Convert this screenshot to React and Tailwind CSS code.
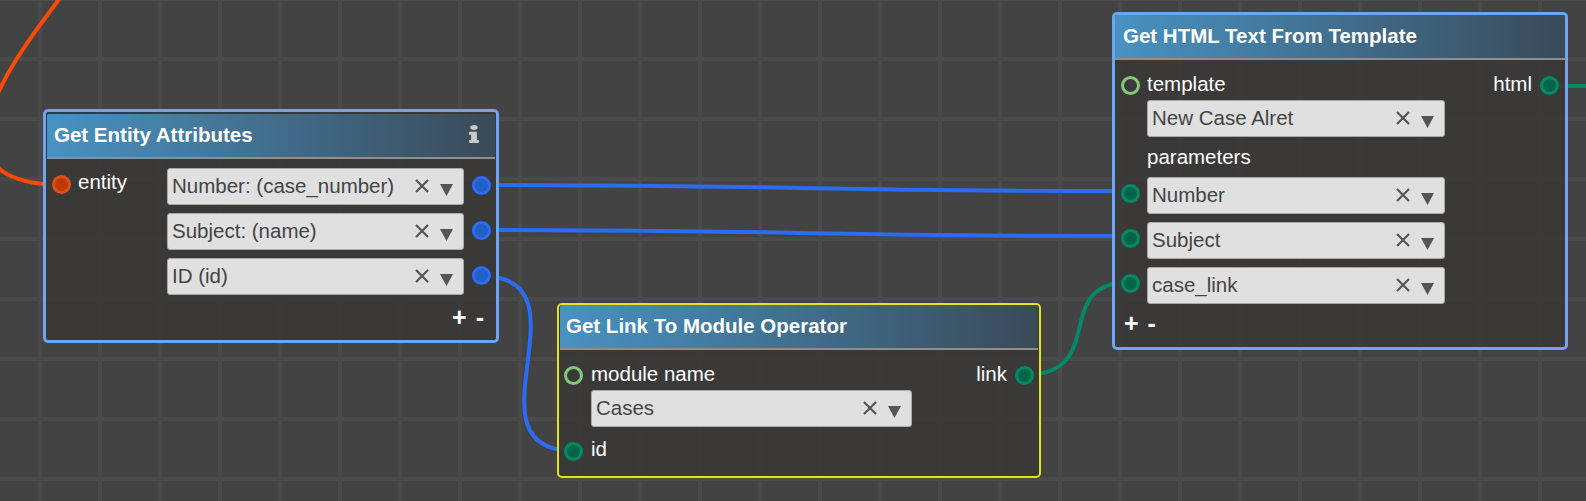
import { FaInfo } from 'react-icons/fa';

const socketStyles = {
  blue: 'border-[#2b6cf2] bg-[#215fc4]',
  green: 'border-[#008a66] bg-[#006647]',
  red: 'border-[#d9501f] bg-[#bf3a00]',
  open: 'border-[#82c77c] bg-transparent',
};

function Socket({ type, className = '' }) {
  return <div className={`w-[19px] h-[19px] shrink-0 rounded-full border-[3px] ${socketStyles[type]} ${className}`} />;
}

function Select({ label, className = 'w-[297px]' }) {
  return (
    <div className={`flex items-center h-[37px] shrink-0 pl-[4px] pr-[10px] rounded-[3px] bg-[#e0e0e0] border border-[#aaaaaa] text-[#444444] ${className}`}>
      <span className="flex-1 whitespace-nowrap pb-[2px]">{label}</span>
      <svg width="14" height="14" viewBox="0 0 14 14" className="mr-[11px] mb-[2px]">
        <path d="M1 1 L13 13 M13 1 L1 13" stroke="#555555" strokeWidth="2.2" fill="none" />
      </svg>
      <svg width="13" height="12" viewBox="0 0 13 12" className="mt-[6px]">
        <path d="M0 0 H13 L6.5 12 Z" fill="#555555" />
      </svg>
    </div>
  );
}

function Header({ title, info, className = 'pl-[7px]' }) {
  return (
    <div className={`flex items-center justify-between h-[43px] pr-[16px] border-b-2 border-[#8f8f8f] box-content bg-[linear-gradient(90deg,#4892c2,#3a4a58)] rounded-t-[2px] ${className}`}>
      <span className="font-bold text-white whitespace-nowrap pb-[2px]">{title}</span>
      {info && <FaInfo preserveAspectRatio="none" className="text-[#c9c9c9] w-[10px] h-[18px] mb-[3px]" />}
    </div>
  );
}

function Node({ title, info, headerClass, className, children }) {
  return (
    <div className={`absolute rounded-[5px] bg-[#3a3938]/95 ${className}`}>
      <Header title={title} info={info} className={headerClass} />
      {children}
    </div>
  );
}

function Controls({ className = '' }) {
  return (
    <div className={`flex items-center gap-[9px] font-bold text-white text-[25px] leading-[24px] ${className}`}>
      <span>+</span>
      <span>-</span>
    </div>
  );
}

export default function App() {
  return (
    <div
      className="relative w-[1586px] h-[501px] overflow-hidden bg-[#434343] bg-[linear-gradient(#4a4a4a_4px,transparent_4px),linear-gradient(90deg,#4a4a4a_4px,transparent_4px)] bg-size-[60px_60px] bg-position-[38px_57px] text-[20.5px] leading-[24px]"
      style={{ fontFamily: '"Liberation Sans", Arial, sans-serif' }}
    >
      {/* wires sit under the nodes */}
      <svg width="1586" height="501" className="absolute inset-0" fill="none" strokeWidth="4">
        <path d="M60 -2 C36 30 12 62 -2 93 C-30 140 -20 184 61 185" stroke="#fa4a05" />
        <path d="M481 185 C800 185 800 191 1130 191" stroke="#2b6cf2" />
        <path d="M481 230 C800 230 800 236 1130 236" stroke="#2b6cf2" />
        <path d="M481 276 C596 276 459 451 574 451" stroke="#2b6cf2" />
        <path d="M1024 375 C1110 375 1050 282 1130 282" stroke="#008a66" />
        <path d="M1550 86 H1590" stroke="#008a66" />
      </svg>

      <Node
        title="Get Entity Attributes"
        info
        className="left-[43px] top-[109px] w-[456px] h-[234px] border-[3px] border-[#6ea4f2] pt-[2px] px-[1px]"
      >
        <div className="flex pl-[5px] pt-[9px]">
          <div className="flex items-start gap-[7px] w-[115px] pt-[7px]">
            <Socket type="red" />
            <span className="-mt-[5px] text-white">entity</span>
          </div>
          <div className="flex flex-col gap-[8px]">
            {['Number: (case_number)', 'Subject: (name)', 'ID (id)'].map((label) => (
              <div key={label} className="flex items-center gap-[8px]">
                <Select label={label} />
                <Socket type="blue" className="-mt-[2px]" />
              </div>
            ))}
            <Controls className="justify-end pr-[7px] mt-[2px]" />
          </div>
        </div>
      </Node>

      <Node
        title="Get Link To Module Operator"
        headerClass="pl-[6px]"
        className="left-[557px] top-[303px] w-[484px] h-[175px] border-2 border-[#e4e41c] px-[1px]"
      >
        <div className="flex justify-between pl-[4px] pr-[4px] pt-[12px]">
          <div>
            <div className="flex items-start gap-[8px]">
              <Socket type="open" className="mt-[4px]" />
              <span className="text-white">module name</span>
            </div>
            <Select label="Cases" className="w-[321px] ml-[27px] mt-[4px]" />
            <div className="flex items-start gap-[8px] mt-[10px]">
              <Socket type="green" className="mt-[5px]" />
              <span className="text-white">id</span>
            </div>
          </div>
          <div className="flex items-start gap-[8px]">
            <span className="text-white">link</span>
            <Socket type="green" className="mt-[4px]" />
          </div>
        </div>
      </Node>

      <Node
        title="Get HTML Text From Template"
        headerClass="pl-[8px]"
        className="left-[1112px] top-[12px] w-[456px] h-[338px] border-[3px] border-[#6ea4f2]"
      >
        <div className="flex justify-between pl-[6px] pr-[6px] pt-[12px]">
          <div>
            <div className="flex items-start gap-[7px]">
              <Socket type="open" className="mt-[4px]" />
              <span className="text-white">template</span>
            </div>
            <Select label="New Case Alret" className="w-[298px] ml-[26px] mt-[4px]" />
            <div className="ml-[26px] mt-[8px] text-white">parameters</div>
            <div className="flex flex-col gap-[8px] mt-[8px]">
              {['Number', 'Subject', 'case_link'].map((label) => (
                <div key={label} className="flex items-center gap-[7px]">
                  <Socket type="green" className="-mt-[5px]" />
                  <Select label={label} className="w-[298px]" />
                </div>
              ))}
            </div>
            <Controls className="pl-[3px] mt-[7px]" />
          </div>
          <div className="flex items-start gap-[8px]">
            <span className="text-white">html</span>
            <Socket type="green" className="mt-[4px]" />
          </div>
        </div>
      </Node>
    </div>
  );
}
